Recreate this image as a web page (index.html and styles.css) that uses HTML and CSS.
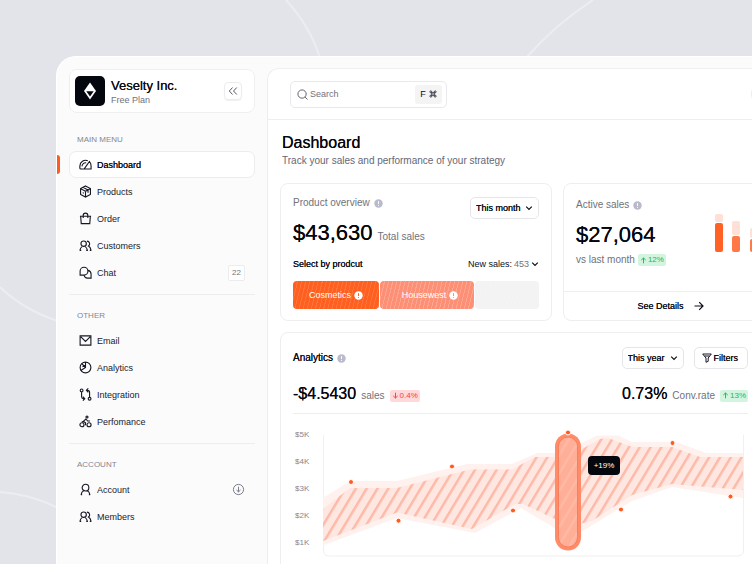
FILE: index.html
```
<!DOCTYPE html>
<html lang="en">
<head>
    <meta charset="UTF-8">
    <meta name="viewport" content="width=device-width, initial-scale=1">
    <title>Veselty Inc. - Dashboard</title>
    <link rel="stylesheet" href="styles.css">
</head>
<body>

<!-- shared icons -->
<svg class="sprite" aria-hidden="true">
    <symbol id="i-info" viewBox="0 0 10 10">
        <circle cx="5" cy="5" r="4.7" fill="currentColor"/>
        <path d="M5 2.4v3.2M5 6.8v1" stroke="var(--mark, #fff)" stroke-width="1.1" fill="none"/>
    </symbol>
    <symbol id="i-chevron" viewBox="0 0 8 8">
        <path d="M1.2 2.6 4 5.4l2.8-2.8" fill="none" stroke="currentColor" stroke-width="1.2"/>
    </symbol>
    <symbol id="i-users" viewBox="0 0 14 14">
        <circle cx="5" cy="5" r="2.9"/>
        <path d="M1 12.2c.3-2.2 1.3-3.4 2.3-4M9 12.2c-.3-2.2-1.3-3.4-2.3-4M8.6 2.3a2.9 2.9 0 0 1 1.6 5.3c1.4.7 2.4 2.3 2.8 4.6M.6 12.2h1.8M7.8 12.2h1.8M11.6 12.2h1.8"/>
    </symbol>
    <symbol id="i-up" viewBox="0 0 8 8">
        <path d="M4 7.2V1.2M1.4 3.6 4 1.1l2.6 2.5" fill="none" stroke="currentColor" stroke-width="1.1"/>
    </symbol>
</svg>

<svg class="backdrop" viewBox="0 0 752 564" aria-hidden="true">
    <path d="M286 0Q310 26 320 58M593 0Q556 24 526 58M0 287Q24 310 58 321M0 492Q30 494 58 508"/>
</svg>

<div class="app">
    <aside class="sidebar">
        <div class="brand">
            <svg class="logo" viewBox="0 0 30 30" aria-hidden="true">
                <rect width="30" height="30" rx="5" fill="#05070f"/>
                <path d="M15 6.5 21 15l-6 8.5L9 15z" fill="#fff"/>
                <path d="M11.3 15.2h7.4L15 20.5z" fill="#05070f"/>
            </svg>
            <div class="brandText">
                <strong class="brandName">Veselty Inc.</strong>
                <span class="brandPlan">Free Plan</span>
            </div>
            <button class="collapse" type="button" aria-label="Collapse menu">
                <svg viewBox="0 0 10 10"><path d="M4.6 1.5 1.3 5l3.3 3.5M8.8 1.5 5.5 5l3.3 3.5"/></svg>
            </button>
        </div>

        <nav class="menu">
            <h2 class="menuTitle">MAIN MENU</h2>
            <a class="menuItem active" href="#">
                <svg class="icon" viewBox="0 0 14 14"><path d="M1.2 11.8a6.3 6.3 0 0 1-.2-3.3A6 6 0 0 1 9.5 3M11.4 4.3A6 6 0 0 1 13 8.500v3.3H1.2M5.8 11.5 11.6 3.2M3.2 9a4 4 0 0 1 4.5-3.8"/></svg>
                Dashboard
            </a>
            <a class="menuItem" href="#">
                <svg class="icon" viewBox="0 0 14 14"><path d="M7 1 12.3 3.9v6.2L7 13 1.7 10.1V3.9zM1.7 3.9 7 6.8l5.3-2.9M7 6.8V13M4.3 2.5l5.4 3v2.9M4 8.2l1.2.7"/></svg>
                Products
            </a>
            <a class="menuItem" href="#">
                <svg class="icon" viewBox="0 0 14 14"><path d="M1 4.6h12M1.8 4.6l.6 7.9h9.2l.6-7.9M4.5 6.5V3.7a2.5 2.5 0 0 1 5 0v2.8"/></svg>
                Order
            </a>
            <a class="menuItem" href="#">
                <svg class="icon"><use href="#i-users"/></svg>
                Customers
            </a>
            <a class="menuItem" href="#">
                <svg class="icon" viewBox="0 0 14 14"><path d="M1.2 9.8V5.5a4.2 4.2 0 1 1 4.2 4.3zM9.8 4.7a4.2 4.2 0 0 1 3.2 4v4.3H9a4 4 0 0 1-3.5-3"/></svg>
                Chat
                <span class="count">22</span>
            </a>
        </nav>

        <nav class="menu">
            <h2 class="menuTitle">OTHER</h2>
            <a class="menuItem" href="#">
                <svg class="icon" viewBox="0 0 14 14"><path d="M1.2 2h11.6v10H1.2zM2 3l5 5 5-5"/></svg>
                Email
            </a>
            <a class="menuItem" href="#">
                <svg class="icon" viewBox="0 0 14 14"><circle cx="7" cy="7" r="5.8"/><path d="M7 1.2V7L2 10.2M7 7l-4-4.2M7 4.5 3.8 6.2"/></svg>
                Analytics
            </a>
            <a class="menuItem" href="#">
                <svg class="icon" viewBox="0 0 14 14"><circle cx="2.8" cy="2.6" r="1.5"/><circle cx="11.4" cy="11.6" r="1.5"/><path d="M2.8 4.2v5.3q0 2 2 2H6M4.2 9.4l2 2.1-2 2.1M11.4 10V4.5q0-2-2-2H8.2M10 .5l-2 2 2 2.1"/></svg>
                Integration
            </a>
            <a class="menuItem" href="#">
                <svg class="icon" viewBox="0 0 14 14"><circle cx="3.2" cy="10.5" r="2.2"/><circle cx="10.8" cy="10.5" r="2.2"/><circle cx="8.6" cy="2.2" r="1.1"/><path d="M7 11V8.4L4.6 6.8 7.4 4.3l1.9 2.2h2.5M3 7.6l2-1"/></svg>
                Perfomance
            </a>
        </nav>

        <nav class="menu">
            <h2 class="menuTitle">ACCOUNT</h2>
            <a class="menuItem" href="#">
                <svg class="icon" viewBox="0 0 14 14"><circle cx="7" cy="5" r="3.6"/><path d="M2.2 13c.3-2.5 1.5-4 3-4.800M11.8 13c-.3-2.5-1.5-4-3-4.8M1.8 12.6h1.6M10.6 12.6h1.6"/></svg>
                Account
                <svg class="icon muted" viewBox="0 0 14 14"><circle cx="7" cy="7" r="5.5"/><path d="M7 4v5.5M4.8 7.5 7 9.600l2.2-2.1"/></svg>
            </a>
            <a class="menuItem" href="#">
                <svg class="icon"><use href="#i-users"/></svg>
                Members
            </a>
        </nav>
    </aside>

    <main class="main">
        <header class="topbar">
            <label class="search">
                <svg viewBox="0 0 12 12" aria-hidden="true"><circle cx="5.5" cy="5.5" r="4.5"/><path d="m8.8 8.8 2.7 2.7"/></svg>
                <input type="search" placeholder="Search" aria-label="Search">
                <kbd>F
                    <svg viewBox="0 0 10 10" aria-hidden="true"><path d="M3.5 3.5h3v3h-3zM3.5 3.5H2.3a1.2 1.2 0 1 1 1.2-1.2zM6.5 3.5V2.3a1.2 1.2 0 1 1 1.2 1.2zM6.5 6.5h1.2a1.2 1.2 0 1 1-1.2 1.2zM3.5 6.5v1.2a1.2 1.2 0 1 1-1.2-1.2z"/></svg>
                </kbd>
            </label>
            <button class="bell" type="button" aria-label="Notifications">
                <svg viewBox="0 0 14 14"><path d="M3 10V6a4 4 0 0 1 8 0v4zM1.5 10h11M6 12.5h2"/></svg>
            </button>
        </header>

        <div class="content">
            <div class="heading">
                <h1>Dashboard</h1>
                <p>Track your sales and performance of your strategy</p>
            </div>

            <div class="cards">
                <section class="card overview">
                    <div class="cardHead">
                        <div>
                            <h3 class="cardTitle">Product overview <svg class="info"><use href="#i-info"/></svg></h3>
                            <p class="amount">$43,630 <small>Total sales</small></p>
                        </div>
                        <div class="selectBox">
                            <select aria-label="Period"><option>This month</option></select>
                            <svg class="chevron"><use href="#i-chevron"/></svg>
                        </div>
                    </div>
                    <div class="row strong">
                        <span>Select by prodcut</span>
                        <button class="newSales" type="button">New sales: <span>453</span><svg class="chevron"><use href="#i-chevron"/></svg></button>
                    </div>
                    <div class="split">
                        <button class="part cosmetics" type="button">Cosmetics <svg class="info"><use href="#i-info"/></svg></button>
                        <button class="part housewest" type="button">Housewest <svg class="info"><use href="#i-info"/></svg></button>
                        <div class="part rest"></div>
                    </div>
                </section>

                <section class="card sales">
                    <div class="salesBody">
                        <div>
                            <h3 class="cardTitle">Active sales <svg class="info"><use href="#i-info"/></svg></h3>
                            <p class="amount">$27,064</p>
                            <p class="versus">vs last month <span class="badge up"><svg><use href="#i-up"/></svg>12%</span></p>
                        </div>
                        <svg class="bars" viewBox="0 0 50 40" aria-hidden="true">
                            <g fill="#ffe0d6">
                                <rect x="0" y="1" width="8" height="8" rx="2"/>
                                <rect x="17" y="8" width="8" height="14" rx="2"/>
                                <rect x="35" y="15" width="8" height="10" rx="2"/>
                            </g>
                            <rect x="0" y="10" width="8" height="29" rx="2" fill="#ff6224"/>
                            <rect x="17" y="23" width="8" height="16" rx="2" fill="#ff7848"/>
                            <rect x="35" y="26" width="8" height="13" rx="2" fill="#ff7848"/>
                        </svg>
                    </div>
                    <a class="details strong" href="#">See Details
                        <svg viewBox="0 0 10 10" aria-hidden="true"><path d="M.5 5h8.5M5.2 1.2 9 5 5.2 8.8"/></svg>
                    </a>
                </section>
            </div>

            <section class="card analytics">
                <div class="row">
                    <h3 class="cardTitle dark strong">Analytics <svg class="info"><use href="#i-info"/></svg></h3>
                    <div class="tools">
                        <div class="selectBox">
                            <select aria-label="Range"><option>This year</option></select>
                            <svg class="chevron"><use href="#i-chevron"/></svg>
                        </div>
                        <button class="filters strong" type="button">
                            <svg viewBox="0 0 10 10" aria-hidden="true"><path d="M.7 1h8.6L6.2 5v3.3L4 9.3V5zM2.5 3h5"/></svg>
                            Filters
                        </button>
                    </div>
                </div>
                <div class="row stats">
                    <p class="stat">-$4.5430 <small>sales</small> <span class="badge down"><svg><use href="#i-up"/></svg>0.4%</span></p>
                    <p class="stat">0.73% <small>Conv.rate</small> <span class="badge up"><svg><use href="#i-up"/></svg>13%</span></p>
                </div>

                <div class="chart">
                    <div class="scale">
                        <span>$5K</span>
                        <span>$4K</span>
                        <span>$3K</span>
                        <span>$2K</span>
                        <span>$1K</span>
                    </div>
                    <svg class="plot" viewBox="320 426 428 132" role="img" aria-label="Sales by month">
                        <defs>
                            <pattern id="hatch" width="9.25" height="9.25" patternUnits="userSpaceOnUse" patternTransform="translate(471 527) rotate(31)">
                                <rect width="2.5" height="9.25" fill="#fdbaa9"/>
                            </pattern>
                            <pattern id="hatchLight" width="9.25" height="9.25" patternUnits="userSpaceOnUse" patternTransform="translate(471 527) rotate(31)">
                                <rect width="2.5" height="9.25" fill="#ffc0ae"/>
                            </pattern>
                            <path id="band" d="M323 508 350 487H397L470 468.5H512L535 456H568L600 438 608 437 632 446H672L700 456H743V489L672 483 632 494 592 520 570 525 523 503H515L472 528 397 511.5 323 540z"/>
                        </defs>
                        <!-- axis frame -->
                        <path d="M323.5 434v115q0 6 6 6h408q6 0 6-6V434" fill="none" stroke="#f0f0f2"/>
                        <path d="M323 497 350 480H397L467 463H512L537 452H562L597 434.5H618L632 441H676L706 452H743V497L672 486 632 500 581 531 568 535 521 507 475 532 397 517 323 544.5z" fill="#fff1ee"/>
                        <use href="#band" fill="#ffe7e1"/>
                        <use href="#band" fill="url(#hatch)"/>
                        <!-- highlighted month -->
                        <rect x="555" y="432.5" width="26" height="117" rx="13" fill="#ff8b68"/>
                        <rect x="558.5" y="436" width="19" height="110" rx="9.5" fill="#ffae98" stroke="#fc7d59"/>
                        <rect x="559" y="436.5" width="18" height="109" rx="9" fill="url(#hatchLight)" opacity=".6"/>
                        <g class="dots">
                            <circle cx="351" cy="481" r="2.5"/>
                            <circle cx="398.5" cy="519.7" r="2.5"/>
                            <circle cx="452" cy="465.5" r="2.5"/>
                            <circle cx="513" cy="509.5" r="2.5"/>
                            <circle cx="568" cy="431.5" r="2.5"/>
                            <circle cx="621" cy="508.5" r="2.5"/>
                            <circle cx="672.5" cy="442" r="2.5"/>
                            <circle cx="730.5" cy="495.5" r="2.5"/>
                        </g>
                        <rect x="588" y="455" width="32" height="19" rx="4" fill="#05070f"/>
                        <text class="tip" x="604" y="467">+19%</text>
                    </svg>
                </div>
            </section>
        </div>
    </main>
</div>

</body>
</html>
```
FILE: styles.css
```
* {
    box-sizing: border-box;
}
html, body {
    height: 100%;
    margin: 0;
    overflow: hidden;
}
body {
    display: flex;
    padding: 56px 0 0 56px;
    background-color: #e3e4e9;
    font-family: 'Liberation Sans', Arial, sans-serif;
    font-size: 9px;
    line-height: 12px;
    color: #0b0d17;
}
h1, h2, h3, p {
    margin: 0;
    font-weight: 400;
}
a {
    color: inherit;
    text-decoration: none;
}
button, input, select {
    font: inherit;
    color: inherit;
    margin: 0;
}
button {
    padding: 0;
    border: 0;
    background: none;
    cursor: pointer;
}
svg {
    flex: none;
}
/* a bit heavier than regular, lighter than bold */
.strong, .brandName, .heading h1, .amount, .stat, .active, .selectBox select {
    text-shadow: 0 0 0 currentColor;
}
small, .badge {
    text-shadow: none;
}
.sprite {
    position: absolute;
    width: 0;
    height: 0;
}
.backdrop {
    position: absolute;
    top: 0;
    left: 0;
    width: 100%;
    z-index: -1;
    fill: none;
    stroke: #ecedf1;
    stroke-width: 2;
}

/* the window runs off the right edge of the screen */
.app {
    flex: none;
    width: calc(100% + 38px);
    display: flex;
    overflow: hidden;
    background-color: #fbfbfc;
    border: 1px solid #fff;
    border-width: 1px 0 0 1px;
    border-radius: 20px 0 0 0;
}

/* sidebar */
.sidebar {
    flex: none;
    width: 210px;
    padding: 12px 12px 0;
}
.brand {
    display: flex;
    align-items: center;
    gap: 6px;
    height: 44px;
    margin-bottom: 21px;
    padding: 0 12px 0 5px;
    border: 1px solid #efeff1;
    border-radius: 8px;
    background-color: #fff;
}
.logo {
    width: 30px;
    height: 30px;
}
.brandText {
    flex: 1;
    display: flex;
    flex-direction: column;
    padding-top: 2px;
}
.brandName {
    font-size: 13px;
    line-height: 16px;
    font-weight: 400;
}
.brandPlan {
    color: #70727f;
}
.collapse {
    display: flex;
    align-items: center;
    justify-content: center;
    width: 18px;
    height: 18px;
    border: 1px solid #ececef;
    border-radius: 4px;
    box-shadow: 0 1px 1px #f0f0f2;
}
.collapse svg {
    width: 10px;
    height: 10px;
    fill: none;
    stroke: #555866;
}
.menu + .menu {
    margin-top: 8px;
    padding-top: 15px;
    border-top: 1px solid #ededf0;
}
.menuTitle {
    margin: 0 8px 5px;
    font-size: 8px;
    color: #85868e;
}
.menuItem {
    position: relative;
    display: flex;
    align-items: center;
    gap: 5px;
    height: 27px;
    padding: 0 9px;
    border: 1px solid transparent;
    border-radius: 7px;
    color: #20222e;
}
.menuItem.active {
    background-color: #fff;
    border-color: #ededf0;
    color: #0b0d17;
}
.menuItem.active:before {
    content: '';
    position: absolute;
    left: -14px;
    top: 3px;
    width: 4px;
    height: 19px;
    border-radius: 0 3px 3px 0;
    background-color: #ff5a1f;
}
.icon {
    width: 13px;
    height: 13px;
    fill: none;
    stroke: #151722;
    stroke-width: 1.2;
}
.icon.muted {
    margin-left: auto;
    stroke: #70727f;
    stroke-width: 1;
}
.count {
    margin-left: auto;
    padding: 1px 3px;
    border: 1px solid #ececef;
    border-radius: 2px;
    background-color: #fff;
    font-size: 8px;
    color: #70727f;
}

/* main area */
.main {
    flex: 1;
    margin-top: 11px;
    border: 1px solid #eeeef0;
    border-width: 1px 0 0 1px;
    border-radius: 12px 0 0 0;
    background-color: #fff;
}
.topbar {
    display: flex;
    align-items: center;
    justify-content: space-between;
    height: 51px;
    padding: 0 11px 0 22px;
    border-bottom: 1px solid #eeeef0;
}
.search {
    display: flex;
    align-items: center;
    gap: 2px;
    width: 157px;
    height: 27px;
    padding: 0 4px 0 6px;
    border: 1px solid #e9e9ed;
    border-radius: 5px;
}
.search svg {
    width: 11px;
    height: 11px;
    fill: none;
    stroke: #555866;
}
.search input {
    flex: 1;
    min-width: 0;
    padding: 0;
    border: 0;
    outline: 0;
    background: none;
}
.search input::placeholder {
    color: #70727f;
}
.search kbd {
    display: flex;
    align-items: center;
    justify-content: center;
    gap: 3px;
    width: 27px;
    height: 19px;
    border-radius: 3px;
    background-color: #f4f4f5;
    font: inherit;
}
.search kbd svg {
    width: 8px;
    height: 8px;
    stroke: #151722;
}
.bell {
    display: flex;
    align-items: center;
    justify-content: center;
    width: 28px;
    height: 28px;
    border: 1px solid #e9e9ed;
    border-radius: 50%;
}
.bell svg {
    width: 14px;
    height: 14px;
    fill: none;
    stroke: #151722;
}
.content {
    padding: 13px 12px;
}
.heading {
    margin: 0 2px 16px;
    font-size: 10px;
    color: #656775;
}
.heading h1 {
    margin-bottom: 2px;
    font-size: 16px;
    line-height: 20px;
    color: #05070f;
}
.cards {
    display: grid;
    grid-template-columns: 272px 1fr;
    gap: 11px;
}
.card {
    border: 1px solid #eeeef0;
    border-radius: 8px;
    background-color: #fff;
}
.cardTitle {
    display: flex;
    align-items: center;
    gap: 4px;
    font-size: 10px;
    color: #70727a;
}
.cardTitle.dark {
    color: #0b0d17;
}
.info {
    width: 9px;
    height: 9px;
    color: #b9bbcb;
}
.amount {
    display: flex;
    align-items: baseline;
    gap: 5px;
    margin-top: 12px;
    font-size: 22px;
    line-height: 24px;
    color: #05070f;
}
small {
    font-size: 10px;
    color: #70727a;
}
.row {
    display: flex;
    align-items: center;
    justify-content: space-between;
}
.chevron {
    width: 8px;
    height: 8px;
}
.selectBox {
    position: relative;
    display: flex;
}
.selectBox select {
    height: 22px;
    padding: 0 17px 0 5px;
    border: 1px solid #e6e6ea;
    border-radius: 5px;
    background-color: #fff;
    appearance: none;
}
.selectBox .chevron {
    position: absolute;
    right: 6px;
    top: 7px;
    pointer-events: none;
}

/* product overview */
.overview {
    padding: 13px 12px 11px;
}
.cardHead {
    display: flex;
    justify-content: space-between;
    align-items: flex-start;
    margin-bottom: 9px;
}
.newSales {
    display: flex;
    align-items: center;
    gap: 2px;
}
.newSales span {
    color: #70727a;
}
.split {
    display: grid;
    grid-template-columns: 86fr 94fr 64fr;
    gap: 1px;
    margin-top: 11px;
}
.part {
    --stripe: rgba(255, 255, 255, 0.12);
    display: flex;
    align-items: center;
    justify-content: center;
    gap: 3px;
    height: 28px;
    border-radius: 4px;
    color: #fff;
    background-image: repeating-linear-gradient(104deg, var(--stripe) 0 1px, transparent 1px 4px);
}
.part .info {
    color: #fff;
}
.cosmetics {
    --mark: #ff6224;
    background-color: #ff5f1f;
}
.housewest {
    --mark: #fc8f74;
    --stripe: rgba(255, 255, 255, 0.2);
    padding-left: 6px;
    background-color: #fc8f74;
}
.rest {
    background-color: #f3f3f4;
}

/* active sales */
.sales {
    display: flex;
    flex-direction: column;
}
.salesBody {
    flex: 1;
    display: flex;
    justify-content: space-between;
    padding: 15px 12px 0;
}
.versus {
    display: flex;
    align-items: center;
    gap: 3px;
    margin-top: 7px;
    font-size: 10px;
    color: #70727a;
}
.badge {
    display: inline-flex;
    align-items: center;
    gap: 1px;
    padding: 0 2px;
    border-radius: 2px;
    font-size: 8px;
    line-height: 12px;
}
.badge svg {
    width: 7px;
    height: 7px;
}
.badge.up {
    background-color: #d3f5df;
    color: #25b45c;
}
.badge.down {
    background-color: #ffd9d9;
    color: #f5404a;
}
.badge.down svg {
    transform: rotate(180deg);
}
.bars {
    width: 50px;
    height: 40px;
    margin-top: 14px;
}
.details {
    display: flex;
    align-items: center;
    justify-content: center;
    gap: 10px;
    height: 29px;
    border-top: 1px solid #eeeef0;
}
.details svg {
    width: 10px;
    height: 10px;
    fill: none;
    stroke: #0b0d17;
    stroke-width: 1.2;
}

/* analytics */
.analytics {
    margin-top: 11px;
    padding: 14px 29px 14px 12px;
}
.tools {
    display: flex;
    gap: 10px;
}
.filters {
    display: flex;
    align-items: center;
    gap: 2px;
    height: 22px;
    padding: 0 9px 0 7px;
    border: 1px solid #e6e6ea;
    border-radius: 5px;
}
.filters svg {
    width: 10px;
    height: 10px;
    fill: none;
    stroke: #151722;
}
.stats {
    padding: 14px 0 6px;
    border-bottom: 1px solid #eeeef0;
}
.stat {
    display: flex;
    align-items: baseline;
    gap: 5px;
    font-size: 16px;
    line-height: 22px;
    color: #05070f;
}
.chart {
    display: flex;
    margin-top: 13px;
}
.scale {
    display: flex;
    flex-direction: column;
    gap: 15px;
    width: 27px;
    padding: 2px 0 0 2px;
    font-size: 8px;
    color: #85868e;
}
.plot {
    flex: 1;
    min-width: 0;
    height: auto;
}
.dots {
    fill: #ff5a1f;
    stroke: #fff;
}
.tip {
    font-size: 8px;
    fill: #fff;
    text-anchor: middle;
}
```
